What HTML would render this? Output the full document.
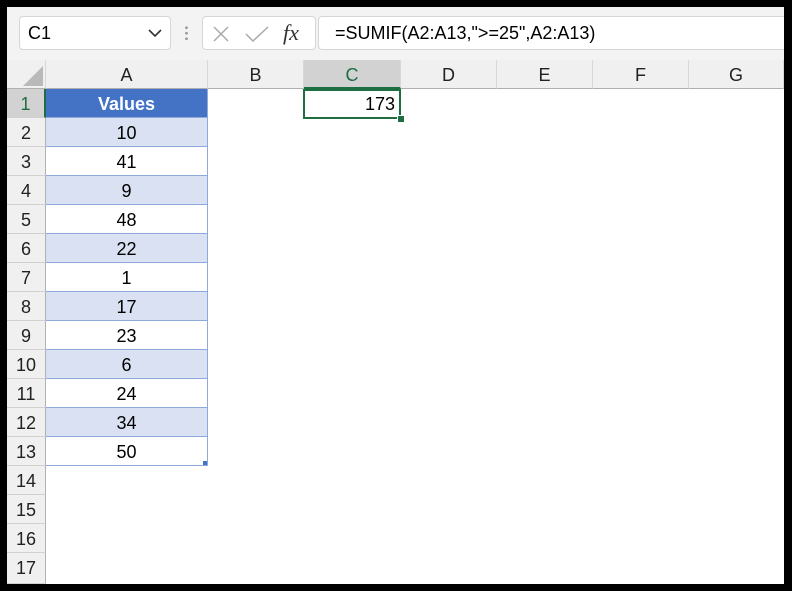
<!DOCTYPE html><html><head><style>
body{margin:0;background:#000;width:792px;height:591px;overflow:hidden;font-family:"Liberation Sans",sans-serif;}
#w{position:absolute;left:7px;top:7px;width:777px;height:577px;background:#fff;overflow:hidden}
#tb{position:absolute;left:0;top:0;width:777px;height:53px;background:#f3f3f3}
.box{position:absolute;background:#fff;border:1px solid #d6d6d6;border-radius:4px;box-sizing:border-box}
.ch{position:absolute;top:53px;height:29px;background:#f0f0f0;border-bottom:1px solid #b0b0b0;border-right:1px solid #d8d8d8;box-sizing:border-box;text-align:center;line-height:31px;font-size:18px;color:#222}
.rh{position:absolute;left:0;width:39px;background:#f0f0f0;border-right:1px solid #b0b0b0;border-bottom:1px solid #d0d0d0;box-sizing:border-box;text-align:center;font-size:18px;color:#222;line-height:30px}
.c{position:absolute;left:39px;width:162px;box-sizing:border-box;border-right:1px solid #8eaadb;border-bottom:1px solid #8eaadb;text-align:center;font-size:18px;line-height:30px;color:#000}
</style></head><body><div id="w">
<div id="tb">
<div class="box" style="left:12px;top:9px;width:152px;height:34px;font-size:18px;line-height:33px;padding-left:8px">C1
<svg style="position:absolute;right:8px;top:12px" width="14" height="9"><path d="M1 1 L7 7 L13 1" stroke="#333" stroke-width="1.6" fill="none"/></svg></div>
<div style="position:absolute;left:178px;top:18px;width:3px;height:16px;background:radial-gradient(circle,#999 1.2px,transparent 1.6px) 0 0/3px 5.5px"></div>
<div class="box" style="left:195px;top:9px;width:114px;height:34px">
<svg style="position:absolute;left:10px;top:9px" width="16" height="16"><path d="M1 1L15 15M15 1L1 15" stroke="#aaa" stroke-width="1.5"/></svg>
<svg style="position:absolute;left:42px;top:9px" width="24" height="16"><path d="M1 8L8 15L23 1" stroke="#aaa" stroke-width="1.5" fill="none"/></svg>
<span style="position:absolute;left:80px;top:3px;font-family:'Liberation Serif',serif;font-style:italic;font-size:22px;color:#333">fx</span></div>
<div class="box" style="left:311px;top:9px;width:470px;height:34px;font-size:18px;line-height:33px;padding-left:16px">=SUMIF(A2:A13,"&gt;=25",A2:A13)</div>
</div>
<div class="ch" style="left:0;width:39px;background:#f0f0f0"><svg style="position:absolute;left:16px;top:6px" width="20" height="20"><path d="M20 0V20H0Z" fill="#b9b9b9"/></svg></div>
<div class="ch" style="left:39px;width:162px">A</div>
<div class="ch" style="left:201px;width:96px">B</div>
<div class="ch" style="left:297px;width:97px;background:#d2d2d2;color:#1e6e42;border-bottom:2px solid #1e6e42">C</div>
<div class="ch" style="left:394px;width:96px">D</div>
<div class="ch" style="left:490px;width:96px">E</div>
<div class="ch" style="left:586px;width:96px">F</div>
<div class="ch" style="left:682px;width:95px">G</div>
<div class="rh" style="top:82px;height:29px;background:#d2d2d2;color:#1e6e42;border-right:2px solid #1e6e42">1</div>
<div class="rh" style="top:111px;height:29px">2</div><div class="rh" style="top:140px;height:29px">3</div><div class="rh" style="top:169px;height:29px">4</div><div class="rh" style="top:198px;height:29px">5</div><div class="rh" style="top:227px;height:29px">6</div><div class="rh" style="top:256px;height:29px">7</div><div class="rh" style="top:285px;height:29px">8</div><div class="rh" style="top:314px;height:29px">9</div><div class="rh" style="top:343px;height:29px">10</div><div class="rh" style="top:372px;height:29px">11</div><div class="rh" style="top:401px;height:29px">12</div><div class="rh" style="top:430px;height:29px">13</div><div class="rh" style="top:459px;height:29px">14</div><div class="rh" style="top:488px;height:29px">15</div><div class="rh" style="top:517px;height:29px">16</div><div class="rh" style="top:546px;height:31px">17</div>
<div class="c" style="top:82px;height:29px;background:#4472c4;color:#fff;font-weight:bold">Values</div>
<div class="c" style="top:111px;height:29px;background:#d9e1f2">10</div>
<div class="c" style="top:140px;height:29px">41</div>
<div class="c" style="top:169px;height:29px;background:#d9e1f2">9</div>
<div class="c" style="top:198px;height:29px">48</div>
<div class="c" style="top:227px;height:29px;background:#d9e1f2">22</div>
<div class="c" style="top:256px;height:29px">1</div>
<div class="c" style="top:285px;height:29px;background:#d9e1f2">17</div>
<div class="c" style="top:314px;height:29px">23</div>
<div class="c" style="top:343px;height:29px;background:#d9e1f2">6</div>
<div class="c" style="top:372px;height:29px">24</div>
<div class="c" style="top:401px;height:29px;background:#d9e1f2">34</div>
<div class="c" style="top:430px;height:29px">50</div>
<div style="position:absolute;left:196px;top:454px;width:4px;height:4px;background:#4472c4"></div>
<div style="position:absolute;left:296px;top:82px;width:98px;height:30px;border:2px solid #1e6e42;box-sizing:border-box;text-align:right;padding-right:4px;font-size:18px;line-height:27px">173</div>
<div style="position:absolute;left:390px;top:108px;width:6px;height:6px;background:#1e6e42;border:1px solid #fff"></div>
</div></body></html>
